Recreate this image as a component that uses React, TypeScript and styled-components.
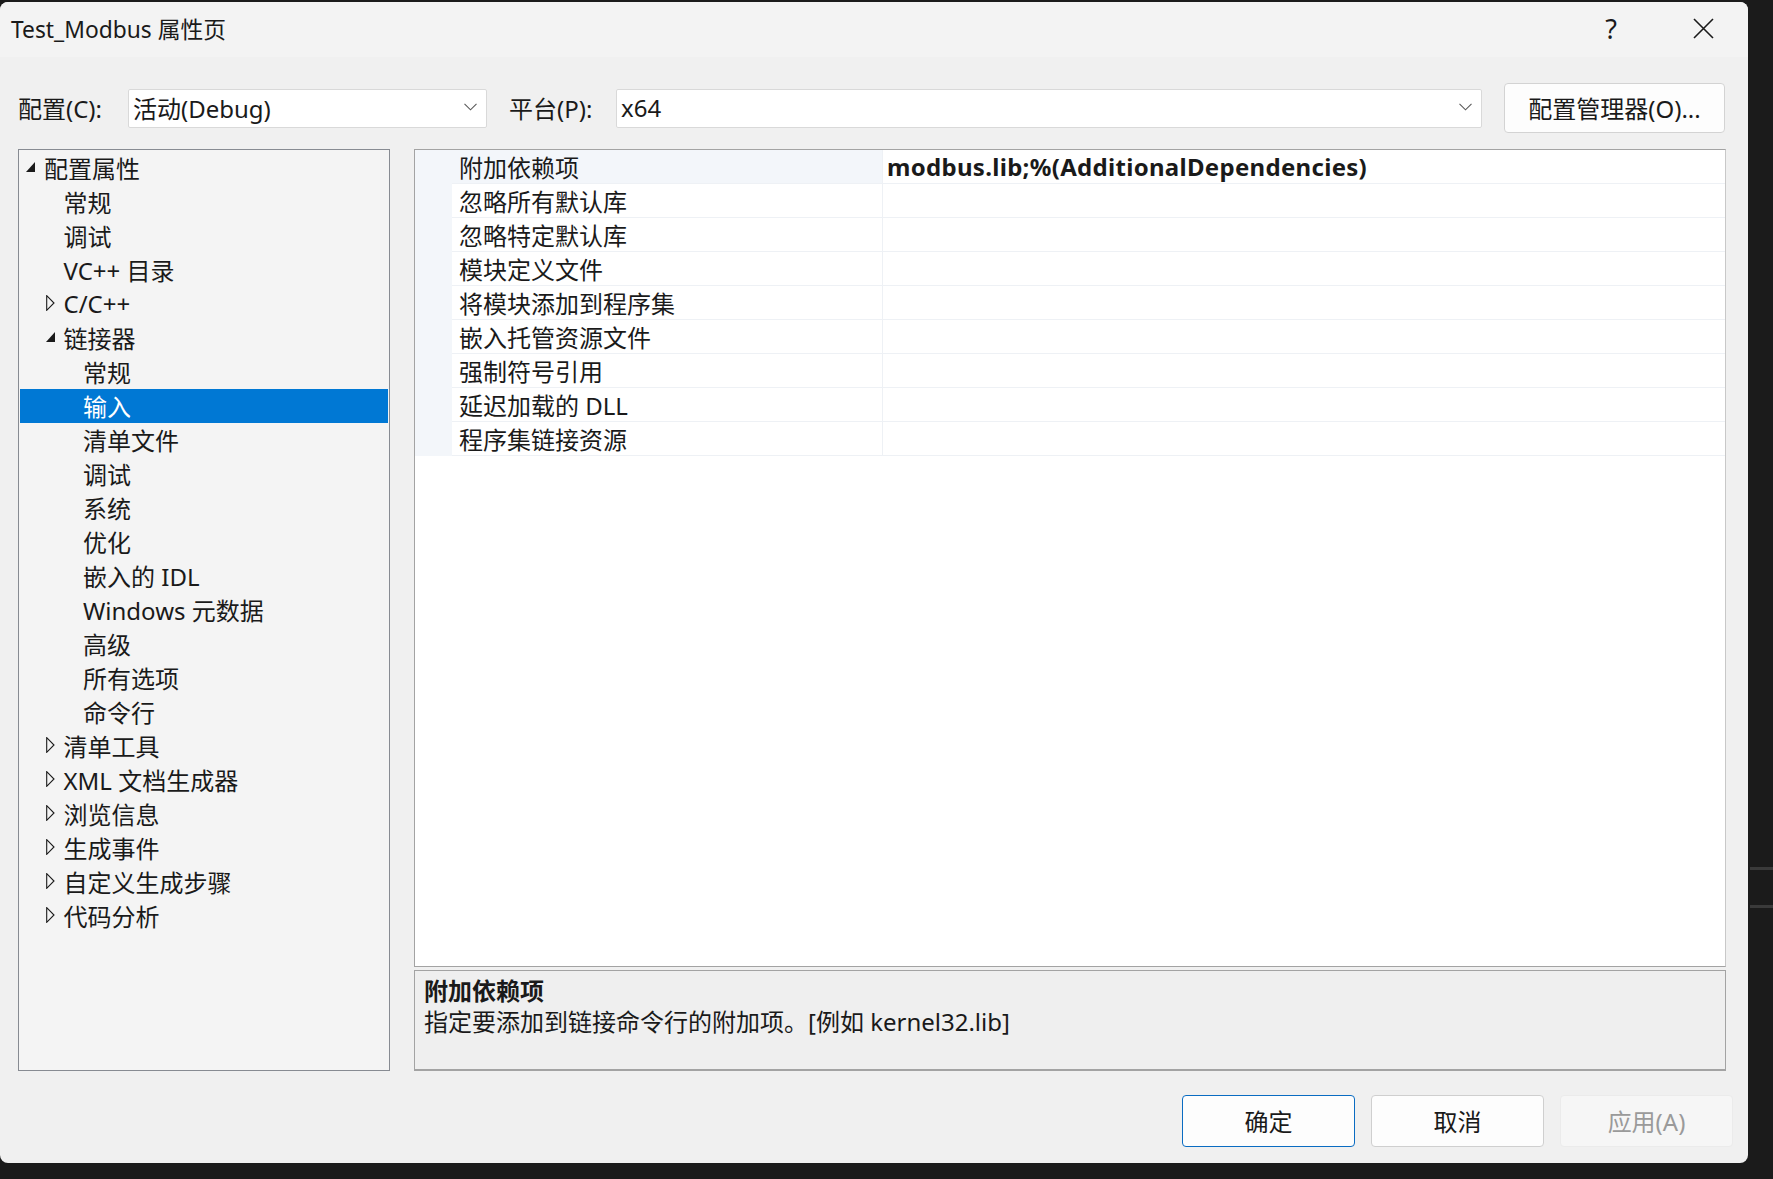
import React from "react";
import styled, { createGlobalStyle } from "styled-components";

const FONT = `"Noto Sans", "Noto Sans CJK SC", sans-serif`;

const GlobalStyle = createGlobalStyle`
  html, body {
    margin: 0;
    padding: 0;
    background: #1b1b1b;
    overflow: hidden;
  }
  body {
    font-family: ${FONT};
    color: #1a1a1a;
  }
  * { box-sizing: border-box; }
`;

const Screen = styled.div`
  position: relative;
  width: 1773px;
  height: 1179px;
  padding-top: 2px;
  background: #1b1b1b;
`;

const BgLine = styled.div<{ $top: number }>`
  position: absolute;
  left: 1750px;
  right: 0;
  top: ${(p) => p.$top}px;
  height: 3px;
  background: #3a3a3a;
`;

const Dialog = styled.div`
  width: 1748px;
  height: 1161px;
  background: #f0f0f0;
  border-radius: 8px;
  overflow: hidden;
  display: flex;
  flex-direction: column;
`;

const TitleBar = styled.div`
  height: 55px;
  flex: none;
  background: #f3f3f3;
  display: flex;
  align-items: center;
  padding: 0 25px 2px 11px;
  font-size: 22.8px;
`;

const TitleText = styled.div`
  flex: 1;
  white-space: nowrap;
`;

const TitleActions = styled.div`
  display: flex;
  align-items: center;
  gap: 52px;
`;

const TitleButton = styled.div`
  width: 40px;
  height: 40px;
  display: flex;
  align-items: center;
  justify-content: center;
  font-size: 27px;
`;

const Body = styled.div`
  flex: 1;
  display: flex;
  flex-direction: column;
  padding: 26px 23px 16px 18px;
  font-size: 24px;
`;

const ConfigRow = styled.div`
  height: 50px;
  display: flex;
  align-items: center;
`;

const FieldLabel = styled.div<{ $w: number; $ml?: number }>`
  width: ${(p) => p.$w}px;
  margin-left: ${(p) => p.$ml ?? 0}px;
  white-space: nowrap;
  flex: none;
  padding-bottom: 2px;
`;

const Combo = styled.div<{ $w: number }>`
  width: ${(p) => p.$w}px;
  height: 39px;
  flex: none;
  background: #ffffff;
  border: 1px solid #d9d9d9;
  border-radius: 2px;
  display: flex;
  align-items: center;
  padding: 0 9px 2px 4px;
`;

const ComboText = styled.div`
  flex: 1;
  white-space: nowrap;
`;

const ManagerButton = styled.div`
  margin-left: 22px;
  width: 221px;
  height: 50px;
  flex: none;
  background: #fdfdfd;
  border: 1px solid #d3d3d3;
  border-radius: 4px;
  display: flex;
  align-items: center;
  justify-content: center;
  white-space: nowrap;
  padding-bottom: 2px;
`;

const Main = styled.div`
  margin-top: 16px;
  height: 922px;
  display: flex;
  gap: 24px;
`;

const TreePanel = styled.div`
  width: 372px;
  flex: none;
  background: #f4f4f4;
  border: 1px solid #878b92;
  padding: 1px;
`;

const TreeRow = styled.div<{ $level: number; $selected?: boolean }>`
  height: 34px;
  display: flex;
  align-items: center;
  padding-left: ${(p) => 6 + p.$level * 19.5}px;
  padding-bottom: 2px;
  background: ${(p) => (p.$selected ? "#0078d4" : "transparent")};
  color: ${(p) => (p.$selected ? "#ffffff" : "#1a1a1a")};
  white-space: nowrap;
`;

const Twisty = styled.div`
  width: 18px;
  height: 32px;
  flex: none;
  display: flex;
  align-items: center;
`;

const RightColumn = styled.div`
  width: 1312px;
  flex: none;
  display: flex;
  flex-direction: column;
  gap: 3px;
`;

const PropPanel = styled.div`
  height: 818px;
  background: #ffffff;
  border: 1px solid #a3a3a3;
  border-right-color: #c8c8c8;
  display: flex;
  align-items: flex-start;
`;

const Gutter = styled.div`
  width: 37px;
  flex: none;
  align-self: flex-start;
  background: #f3f6fa;
`;

const PropGrid = styled.div`
  flex: 1;
  display: grid;
  grid-template-columns: 431px 1fr;
`;

const PropName = styled.div<{ $active?: boolean }>`
  height: 34px;
  display: flex;
  align-items: center;
  padding-left: 7px;
  background: ${(p) => (p.$active ? "#f3f6fa" : "#ffffff")};
  border-bottom: 1px solid #eef1f5;
  border-right: 1px solid #eef1f5;
  white-space: nowrap;
`;

const PropValue = styled.div`
  height: 34px;
  display: flex;
  align-items: center;
  padding-left: 4px;
  border-bottom: 1px solid #eef1f5;
  font-weight: 700;
  letter-spacing: 0.3px;
  white-space: nowrap;
`;

const DescPanel = styled.div`
  height: 101px;
  background: #efefef;
  border: 1px solid #a3a3a3;
  border-bottom-width: 2px;
  padding: 4px 9px;
`;

const DescTitle = styled.div`
  font-weight: 700;
  line-height: 31px;
`;

const DescText = styled.div`
  line-height: 31px;
  white-space: nowrap;
`;

const Footer = styled.div`
  margin-top: 24px;
  margin-right: -8px;
  display: flex;
  justify-content: flex-end;
  gap: 16px;
`;

const DialogButton = styled.div<{ $variant: "primary" | "normal" | "disabled" }>`
  width: 173px;
  height: 52px;
  border-radius: 4px;
  display: flex;
  align-items: center;
  justify-content: center;
  padding-bottom: 2px;
  background: ${(p) => (p.$variant === "disabled" ? "#f6f6f6" : "#fdfdfd")};
  border: 1px solid
    ${(p) =>
      p.$variant === "primary"
        ? "#0a6cc2"
        : p.$variant === "disabled"
        ? "#ebebeb"
        : "#cfcfcf"};
  color: ${(p) => (p.$variant === "disabled" ? "#9a9a9a" : "#1a1a1a")};
`;

const Chevron = () => (
  <svg width="13" height="8" viewBox="0 0 13 8">
    <polyline points="0.5,0.8 6.5,6.8 12.5,0.8" fill="none" stroke="#5a5a5a" strokeWidth="1.1" />
  </svg>
);

const CloseIcon = () => (
  <svg width="21" height="21" viewBox="0 0 21 21">
    <path d="M1 1 L20 20 M20 1 L1 20" stroke="#1a1a1a" strokeWidth="1.6" fill="none" />
  </svg>
);

const Expanded = () => (
  <svg width="9" height="10" viewBox="0 0 9 10">
    <polygon points="9,0 9,10 0,10" fill="#1a1a1a" />
  </svg>
);

const Collapsed = () => (
  <svg width="9" height="16" viewBox="0 0 9 16">
    <polygon points="0.7,0.7 8,8 0.7,15.3" fill="none" stroke="#1a1a1a" strokeWidth="1.1" />
  </svg>
);

type Node = { label: string; level: number; state?: "open" | "closed"; selected?: boolean };

const tree: Node[] = [
  { label: "配置属性", level: 0, state: "open" },
  { label: "常规", level: 1 },
  { label: "调试", level: 1 },
  { label: "VC++ 目录", level: 1 },
  { label: "C/C++", level: 1, state: "closed" },
  { label: "链接器", level: 1, state: "open" },
  { label: "常规", level: 2 },
  { label: "输入", level: 2, selected: true },
  { label: "清单文件", level: 2 },
  { label: "调试", level: 2 },
  { label: "系统", level: 2 },
  { label: "优化", level: 2 },
  { label: "嵌入的 IDL", level: 2 },
  { label: "Windows 元数据", level: 2 },
  { label: "高级", level: 2 },
  { label: "所有选项", level: 2 },
  { label: "命令行", level: 2 },
  { label: "清单工具", level: 1, state: "closed" },
  { label: "XML 文档生成器", level: 1, state: "closed" },
  { label: "浏览信息", level: 1, state: "closed" },
  { label: "生成事件", level: 1, state: "closed" },
  { label: "自定义生成步骤", level: 1, state: "closed" },
  { label: "代码分析", level: 1, state: "closed" },
];

const props: { name: string; value?: string }[] = [
  { name: "附加依赖项", value: "modbus.lib;%(AdditionalDependencies)" },
  { name: "忽略所有默认库" },
  { name: "忽略特定默认库" },
  { name: "模块定义文件" },
  { name: "将模块添加到程序集" },
  { name: "嵌入托管资源文件" },
  { name: "强制符号引用" },
  { name: "延迟加载的 DLL" },
  { name: "程序集链接资源" },
];

export default function App() {
  return (
    <>
      <GlobalStyle />
      <Screen>
        <BgLine $top={867} />
        <BgLine $top={905} />
        <Dialog>
          <TitleBar>
            <TitleText>Test_Modbus 属性页</TitleText>
            <TitleActions>
              <TitleButton>?</TitleButton>
              <TitleButton>
                <CloseIcon />
              </TitleButton>
            </TitleActions>
          </TitleBar>
          <Body>
            <ConfigRow>
              <FieldLabel $w={110}>配置(C):</FieldLabel>
              <Combo $w={359}>
                <ComboText>活动(Debug)</ComboText>
                <Chevron />
              </Combo>
              <FieldLabel $w={107} $ml={22}>平台(P):</FieldLabel>
              <Combo $w={866}>
                <ComboText>x64</ComboText>
                <Chevron />
              </Combo>
              <ManagerButton>配置管理器(O)...</ManagerButton>
            </ConfigRow>
            <Main>
              <TreePanel>
                {tree.map((n, i) => (
                  <TreeRow key={i} $level={n.level} $selected={n.selected}>
                    <Twisty>
                      {n.state === "open" && <Expanded />}
                      {n.state === "closed" && <Collapsed />}
                    </Twisty>
                    {n.label}
                  </TreeRow>
                ))}
              </TreePanel>
              <RightColumn>
                <PropPanel>
                  <Gutter style={{ height: props.length * 34 }} />
                  <PropGrid>
                    {props.map((p, i) => (
                      <React.Fragment key={i}>
                        <PropName $active={i === 0}>{p.name}</PropName>
                        <PropValue>{p.value ?? ""}</PropValue>
                      </React.Fragment>
                    ))}
                  </PropGrid>
                </PropPanel>
                <DescPanel>
                  <DescTitle>附加依赖项</DescTitle>
                  <DescText>指定要添加到链接命令行的附加项。[例如 kernel32.lib]</DescText>
                </DescPanel>
              </RightColumn>
            </Main>
            <Footer>
              <DialogButton $variant="primary">确定</DialogButton>
              <DialogButton $variant="normal">取消</DialogButton>
              <DialogButton $variant="disabled">应用(A)</DialogButton>
            </Footer>
          </Body>
        </Dialog>
      </Screen>
    </>
  );
}
